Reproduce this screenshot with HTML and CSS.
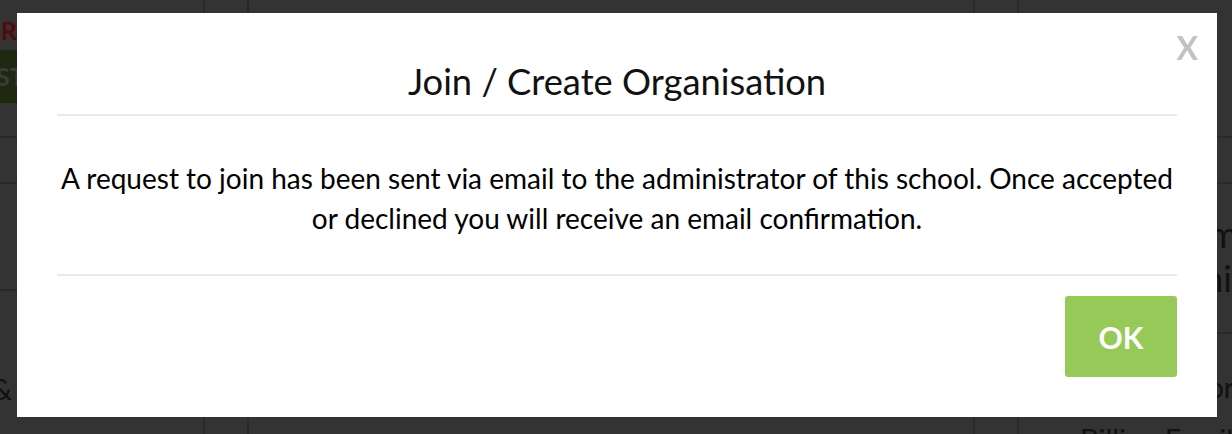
FILE: index.html
```html
<!DOCTYPE html>
<html lang="en">
<head>
<meta charset="utf-8">
<title>Join / Create Organisation</title>
<link rel="stylesheet" href="styles.css">
</head>
<body>
<div class="page">
  <div class="col c1">
    <div class="cell h138">
      <div class="alert">RENEW</div>
      <div class="status">STATUS</div>
    </div>
    <div class="cell h46"></div>
    <div class="cell h107"></div>
    <div class="cell last"><div class="amp">&amp; Co</div></div>
  </div>
  <div class="col c2"></div>
  <div class="col c3"><div class="cell last"><div class="contact">Contact</div></div></div>
  <div class="col c4"></div>
  <div class="col c5">
    <div class="cell h138"></div>
    <div class="cell h46"></div>
    <div class="cell h150">
      <span class="line l1">Program</span>
      <span class="line l2">Admini</span>
    </div>
    <div class="cell last">
      <span class="line l3">Coor</span>
      <div class="billing">Billing Email</div>
    </div>
  </div>
</div>

<div class="modal">
  <button class="close" type="button">X</button>
  <div class="modal-header">
    <h2 class="modal-title">Join / Create Organisation</h2>
  </div>
  <div class="modal-body">
    <p>A request to join has been sent via email to the administrator of this school. Once accepted or declined you will receive an email confirmation.</p>
  </div>
  <div class="modal-footer">
    <button class="ok" type="button">OK</button>
  </div>
</div>
</body>
</html>
```

FILE: styles.css
```css
* { box-sizing: border-box; }
html, body { margin: 0; height: 100%; }
body {
  background: #333;
  font-family: Lato, "Open Sans", "Liberation Sans", sans-serif;
  overflow: hidden;
  color: #0d0d0d;
}

/* dimmed page behind the dialog */
.page {
  display: grid;
  grid-template-columns: 205px 44px 726px 44px 1fr;
  height: 434px;
}
.col {
  border-right: 2px solid #292929;
  display: flex;
  flex-direction: column;
  min-width: 0;
  overflow: hidden;
}
.col.c5 { border-right: 0; }
.cell { border-bottom: 2px solid #292929; flex: none; }
.cell.last { border-bottom: 0; flex: 1; }
.h138 { height: 138px; }
.h46 { height: 46px; }
.h107 { height: 107px; }
.h150 { height: 150px; }

.c1 .h138 { padding-top: 15px; }
.alert {
  color: #560808;
  font-weight: 700;
  font-size: 25px;
  line-height: 30px;
  padding-left: 1px;
}
.status {
  margin-top: 5px;
  height: 53px;
  background: #1e290f;
  color: #3c3c3c;
  font-weight: 700;
  font-size: 25px;
  line-height: 53px;
  text-indent: -4px;
}
.amp {
  padding-top: 81px;
  margin-left: -8px;
  font-size: 28px;
  line-height: 34px;
  color: #111;
}
.contact {
  padding-top: 428px;
  padding-right: 80px;
  text-align: right;
  font-size: 28px;
  line-height: 34px;
  color: #111;
}

.c5 .h150 { padding-top: 28px; text-align: right; }
.line { display: block; color: #111; white-space: nowrap; }
.l1 { font-size: 36px; line-height: 44px; margin-right: -6px; }
.l2 { font-size: 36px; line-height: 44px; margin-right: 0; }
.c5 .last { text-align: right; padding-top: 36px; }
.l3 { font-size: 28px; line-height: 34px; margin-right: -2px; }
.billing {
  text-align: left;
  padding-left: 61px;
  margin-top: 18px;
  font-size: 29px;
  line-height: 34px;
  color: #111;
  white-space: nowrap;
}

/* dialog */
.modal {
  position: fixed;
  left: 17px;
  top: 13px;
  width: 1200px;
  height: 404px;
  background: #fff;
  padding: 0 40px;
  display: flex;
  flex-direction: column;
}
.close {
  position: absolute;
  top: 19px;
  right: 19px;
  border: 0;
  background: none;
  padding: 0;
  font-family: inherit;
  font-weight: 700;
  font-size: 32px;
  line-height: 32px;
  color: #c2c2c2;
  cursor: pointer;
}
.modal-header {
  height: 103px;
  padding-top: 46px;
  border-bottom: 2px solid #e9e9e9;
}
.modal-title {
  margin: 0;
  font-weight: 400;
  font-size: 36.3px;
  line-height: 44px;
  text-align: center;
  color: #111;
}
.modal-body {
  padding: 42px 0 36px;
  border-bottom: 2px solid #e9e9e9;
}
.modal-body p {
  margin: 0;
  font-size: 28px;
  line-height: 40px;
  text-align: center;
  color: #000;
}
.modal-footer {
  padding-top: 20px;
  display: flex;
  justify-content: flex-end;
}
.ok {
  width: 112px;
  height: 81px;
  border: 0;
  border-radius: 3px;
  background: #96c958;
  color: #fff;
  font-family: inherit;
  font-weight: 700;
  font-size: 30px;
  cursor: pointer;
}
```
